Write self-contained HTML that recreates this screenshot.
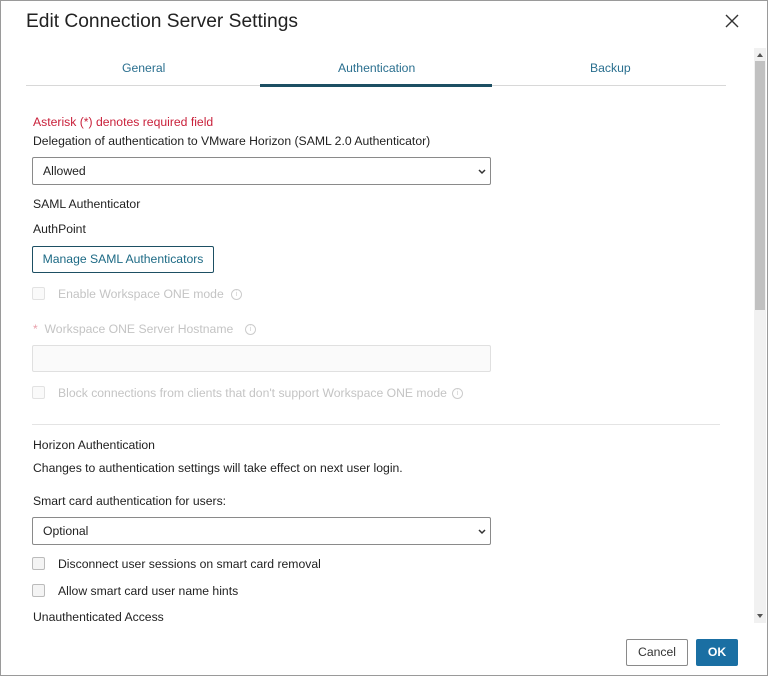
<!DOCTYPE html>
<html><head><meta charset="utf-8"><style>
*{margin:0;padding:0;box-sizing:border-box}
body{width:768px;height:676px;background:#fff;font-family:"Liberation Sans",sans-serif;color:#222;position:relative;overflow:hidden}
.frame{position:absolute;left:0;top:0;width:768px;height:676px;border:1px solid #9a9a9a}
.a{position:absolute;white-space:nowrap}
.t{font-size:12.2px}
.dis{color:#c4c4c4}
.cb{position:absolute;width:13px;height:13px;border:1px solid #bbb;border-radius:2px;background:#f4f4f4}
.cbd{border-color:#e2e2e2;background:#fafafa}
.sel{position:absolute;left:32px;width:459px;height:28px;border:1px solid #8a8a8a;border-radius:2px;font-size:12.2px;padding:6px 10px;background:#fff}
.sel svg{position:absolute;right:4px;top:11px}
.info{position:absolute;width:11px;height:11px;border:1px solid #ccc;border-radius:50%;font-size:7px;color:#ccc;text-align:center;line-height:9px}
</style></head><body>
<div class="frame"></div>
<div class="a" style="left:26px;top:11px;font-size:19.2px;color:#222">Edit Connection Server Settings</div>
<svg class="a" style="left:725px;top:14px" width="14" height="14"><path d="M1 1L13 13M13 1L1 13" stroke="#333" stroke-width="1.4"/></svg>
<div class="a t" style="left:122px;top:61px;color:#2a6f8f">General</div>
<div class="a t" style="left:338px;top:61px;color:#2a6f8f">Authentication</div>
<div class="a t" style="left:590px;top:61px;color:#2a6f8f">Backup</div>
<div class="a" style="left:26px;top:85px;width:700px;height:1px;background:#d8d8d8"></div>
<div class="a" style="left:260px;top:84px;width:232px;height:3px;background:#1d4f63"></div>
<div class="a t" style="left:33px;top:115px;color:#c9213b">Asterisk (*) denotes required field</div>
<div class="a t" style="left:33px;top:134px">Delegation of authentication to VMware Horizon (SAML 2.0 Authenticator)</div>
<div class="sel" style="top:157px">Allowed<svg width="8" height="6"><path d="M1 1L4 4L7 1" stroke="#333" stroke-width="1.5" fill="none"/></svg></div>
<div class="a t" style="left:33px;top:197px">SAML Authenticator</div>
<div class="a t" style="left:33px;top:222px">AuthPoint</div>
<div class="a t" style="left:32px;top:246px;width:182px;height:27px;border:1px solid #1d4f63;border-radius:2px;color:#1d6a85;text-align:center;line-height:25px">Manage SAML Authenticators</div>
<div class="cb cbd" style="left:32px;top:287px"></div>
<div class="a t dis" style="left:58px;top:287px">Enable Workspace ONE mode</div>
<div class="info" style="left:231px;top:289px">i</div>
<div class="a t dis" style="left:33px;top:322px"><span style="color:#e8a0ab">*</span>&nbsp; Workspace ONE Server Hostname</div>
<div class="info" style="left:245px;top:324px">i</div>
<div class="a" style="left:32px;top:345px;width:459px;height:27px;border:1px solid #e0e0e0;border-radius:2px;background:#fafafa"></div>
<div class="cb cbd" style="left:32px;top:386px"></div>
<div class="a t dis" style="left:58px;top:386px">Block connections from clients that don't support Workspace ONE mode</div>
<div class="info" style="left:452px;top:388px">i</div>
<div class="a" style="left:32px;top:424px;width:688px;height:1px;background:#e4e4e4"></div>
<div class="a t" style="left:33px;top:438px">Horizon Authentication</div>
<div class="a t" style="left:33px;top:461px">Changes to authentication settings will take effect on next user login.</div>
<div class="a t" style="left:33px;top:494px">Smart card authentication for users:</div>
<div class="sel" style="top:517px">Optional<svg width="8" height="6"><path d="M1 1L4 4L7 1" stroke="#333" stroke-width="1.5" fill="none"/></svg></div>
<div class="cb" style="left:32px;top:557px"></div>
<div class="a t" style="left:58px;top:557px">Disconnect user sessions on smart card removal</div>
<div class="cb" style="left:32px;top:584px"></div>
<div class="a t" style="left:58px;top:584px">Allow smart card user name hints</div>
<div class="a t" style="left:33px;top:610px">Unauthenticated Access</div>
<div class="a" style="left:754px;top:48px;width:12px;height:575px;background:#f1f1f1"></div>
<div class="a" style="left:755px;top:61px;width:10px;height:249px;background:#c1c1c1"></div>
<svg class="a" style="left:756px;top:52px" width="8" height="6"><path d="M1 5L4 1L7 5Z" fill="#555"/></svg>
<svg class="a" style="left:756px;top:613px" width="8" height="6"><path d="M1 1L4 5L7 1Z" fill="#555"/></svg>
<div class="a t" style="left:626px;top:639px;width:62px;height:27px;border:1px solid #8a8a8a;border-radius:2px;text-align:center;line-height:25px;color:#333">Cancel</div>
<div class="a t" style="left:696px;top:639px;width:42px;height:27px;background:#1a6fa3;border-radius:2px;text-align:center;line-height:27px;color:#fff;font-weight:bold">OK</div>
</body></html>
